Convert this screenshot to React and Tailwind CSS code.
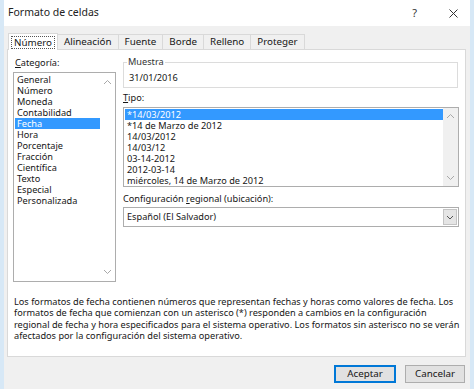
import React from 'react';

const categories = [
    'General', 'Número', 'Moneda', 'Contabilidad', 'Fecha', 'Hora',
    'Porcentaje', 'Fracción', 'Científica', 'Texto', 'Especial', 'Personalizada',
];

const tipos = [
    '*14/03/2012',
    '*14 de Marzo de 2012',
    '14/03/2012',
    '14/03/12',
    '03-14-2012',
    '2012-03-14',
    'miércoles, 14 de Marzo de 2012',
];

const tabs = ['Número', 'Alineación', 'Fuente', 'Borde', 'Relleno', 'Proteger'];

function Chevron({ up }) {
    return (
        <svg width="9" height="6" viewBox="0 0 9 6" className="block">
            {up ? (
                <polyline points="1,5 4.5,1.5 8,5" fill="none" stroke="#a8a8a8" strokeWidth="1" />
            ) : (
                <polyline points="1,1 4.5,4.5 8,1" fill="none" stroke="#a8a8a8" strokeWidth="1" />
            )}
        </svg>
    );
}

function App() {
    return (
        <div
            className="w-[474px] h-[389px] flex bg-[#d7e8f6] overflow-hidden text-[#161616]"
            style={{ fontFamily: '"Noto Sans", "Open Sans", sans-serif' }}
        >
            <div className="ml-[4px] w-[466px] h-full bg-[#f0f0f0] flex flex-col">
                {/* title bar */}
                <div className="h-[26px] bg-white flex items-center pl-[4px] pr-[12px]">
                    <span className="text-[10.5px] text-[#222]">Formato de celdas</span>
                    <span className="ml-auto text-[11px] text-[#333] mr-[32px]">?</span>
                    <svg width="9" height="9" viewBox="0 0 9 9">
                        <path d="M0.5 0.5 L8.5 8.5 M8.5 0.5 L0.5 8.5" stroke="#333" strokeWidth="1" />
                    </svg>
                </div>

                {/* tabs */}
                <div className="mt-[7px] ml-[4px] flex items-end h-[16px] text-[9.8px] relative z-10">
                    {tabs.map((t, i) =>
                        i === 0 ? (
                            <div key={t} className="h-[17px] px-[2px] bg-white border border-b-0 border-[#d9d9d9] flex items-center -mb-px">
                                <span className="border border-dotted border-[#555] px-[2px] leading-[11px]">{t}</span>
                            </div>
                        ) : (
                            <div key={t} className="h-[15px] px-[6px] border border-l-0 border-b-0 border-[#d9d9d9] flex items-center">
                                {t}
                            </div>
                        )
                    )}
                </div>

                {/* panel */}
                <div className="ml-[3px] mr-[4px] h-[308px] bg-white border border-[#d9d9d9] pl-[5px] pt-[7px] flex flex-col text-[9.2px]">
                    <div className="flex">
                        <div className="w-[103px] flex flex-col">
                            <div className="pl-[2px] leading-[11px]">
                                <span className="underline">C</span>ategoría:
                            </div>
                            <div className="mt-[4px] h-[210px] border border-[#adadad] flex">
                                <div className="flex-1 pt-[1px] pl-[1px]">
                                    {categories.map((c) => (
                                        <div
                                            key={c}
                                            className={
                                                c === 'Fecha'
                                                    ? 'h-[11px] leading-[11px] pl-[2px] bg-[#3399ff] text-white'
                                                    : 'h-[11px] leading-[11px] pl-[2px]'
                                            }
                                        >
                                            {c}
                                        </div>
                                    ))}
                                </div>
                                <div className="w-[15px] flex flex-col items-center justify-between py-[6px]">
                                    <Chevron up />
                                    <Chevron />
                                </div>
                            </div>
                        </div>

                        <div className="ml-[7px] w-[336px] flex flex-col pt-[5px]">
                            <div className="relative h-[26px] border border-[#dcdcdc] mr-[1px]">
                                <span className="absolute -top-[7px] left-[3px] bg-white px-[1px] leading-[11px] text-[#333]">Muestra</span>
                                <div className="pl-[5px] pt-[9px] leading-[11px]">31/01/2016</div>
                            </div>
                            <div className="mt-[4px] leading-[11px]">
                                <span className="underline">T</span>ipo:
                            </div>
                            <div className="mt-[4px] h-[80px] border border-[#adadad] flex">
                                <div className="flex-1 pt-[1px] pl-[1px]">
                                    {tipos.map((t, i) => (
                                        <div
                                            key={t}
                                            className={
                                                i === 0
                                                    ? 'h-[11px] leading-[11px] pl-[2px] bg-[#3399ff] text-white'
                                                    : 'h-[11px] leading-[11px] pl-[2px]'
                                            }
                                        >
                                            {t}
                                        </div>
                                    ))}
                                </div>
                                <div className="w-[15px] bg-[#f0f0f0] flex flex-col items-center justify-between py-[5px]">
                                    <Chevron up />
                                    <Chevron />
                                </div>
                            </div>
                            <div className="mt-[6px] leading-[11px]">
                                Configuración <span className="underline">r</span>egional (ubicación):
                            </div>
                            <div className="mt-[3px] h-[20px] border border-[#adadad] flex items-center">
                                <span className="pl-[3px]">Español (El Salvador)</span>
                                <div className="ml-auto mr-[1px] w-[14px] h-[16px] bg-[#e5e5e5] border border-[#c4c4c4] flex items-center justify-center">
                                    <svg width="8" height="5" viewBox="0 0 8 5">
                                        <polyline points="1,1 4,4 7,1" fill="none" stroke="#555" strokeWidth="1" />
                                    </svg>
                                </div>
                            </div>
                        </div>
                    </div>

                    <p className="mt-[14px] pl-[1px] leading-[11.3px] whitespace-nowrap">
                        Los formatos de fecha contienen números que representan fechas y horas como valores de fecha. Los
                        <br />
                        formatos de fecha que comienzan con un asterisco (*) responden a cambios en la configuración
                        <br />
                        regional de fecha y hora especificados para el sistema operativo. Los formatos sin asterisco no se verán
                        <br />
                        afectados por la configuración del sistema operativo.
                    </p>
                </div>

                {/* buttons */}
                <div className="mt-[8px] flex justify-end gap-[9px] pr-[5px] text-[9.8px]">
                    <button className="w-[62px] h-[18px] bg-[#e1e1e1] border border-[#0078d7] outline outline-1 outline-[#0078d7] -outline-offset-2">
                        Aceptar
                    </button>
                    <button className="w-[60px] h-[18px] bg-[#e1e1e1] border border-[#adadad]">
                        Cancelar
                    </button>
                </div>
            </div>
        </div>
    );
}

export default App;
